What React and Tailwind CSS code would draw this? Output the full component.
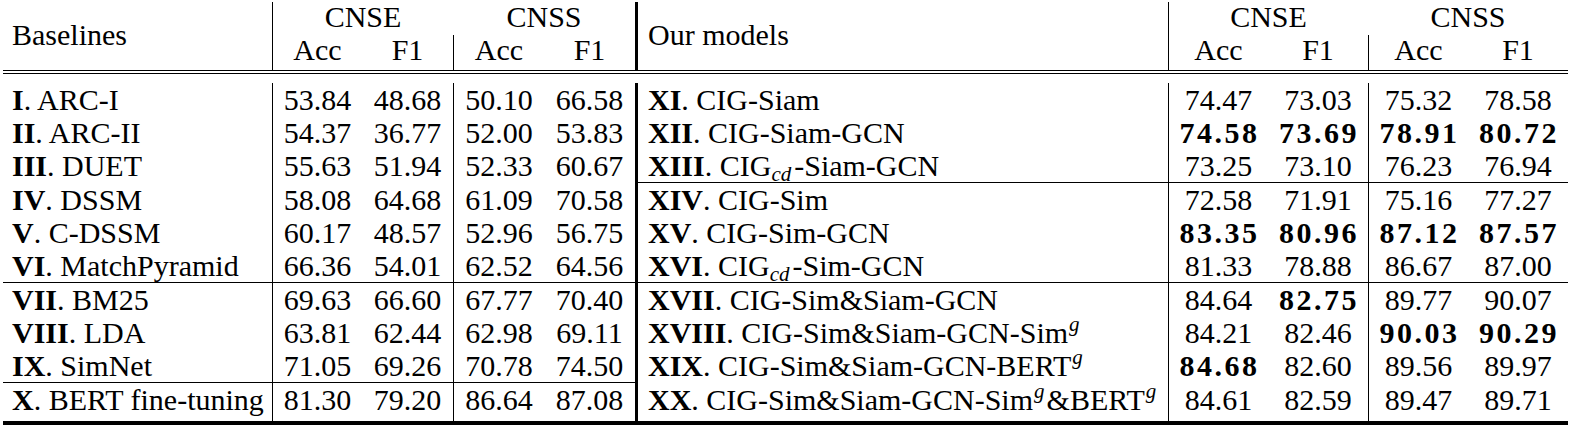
const cols = 'grid grid-cols-[269px_90px_91px_91px_91px_533px_100px_100px_100px_100px]'

const left = [
  ['I', 'ARC-I', ['53.84', '48.68', '50.10', '66.58']],
  ['II', 'ARC-II', ['54.37', '36.77', '52.00', '53.83']],
  ['III', 'DUET', ['55.63', '51.94', '52.33', '60.67']],
  ['IV', 'DSSM', ['58.08', '64.68', '61.09', '70.58']],
  ['V', 'C-DSSM', ['60.17', '48.57', '52.96', '56.75']],
  ['VI', 'MatchPyramid', ['66.36', '54.01', '62.52', '64.56']],
  ['VII', 'BM25', ['69.63', '66.60', '67.77', '70.40']],
  ['VIII', 'LDA', ['63.81', '62.44', '62.98', '69.11']],
  ['IX', 'SimNet', ['71.05', '69.26', '70.78', '74.50']],
  ['X', 'BERT fine-tuning', ['81.30', '79.20', '86.64', '87.08']],
]

const Sub = ({ children }) => (
  <sub className="text-[21px] italic leading-none bottom-[-5px] pr-[3px]">{children}</sub>
)
const Sup = ({ children }) => (
  <sup className="text-[21px] italic leading-none top-[-12px] pl-[1px] pr-[2px]">{children}</sup>
)

// numbers: [value, bold]
const right = [
  ['XI', <>CIG-Siam</>, [['74.47'], ['73.03'], ['75.32'], ['78.58']]],
  ['XII', <>CIG-Siam-GCN</>, [['74.58', 1], ['73.69', 1], ['78.91', 1], ['80.72', 1]]],
  ['XIII', <>CIG<Sub>cd</Sub>-Siam-GCN</>, [['73.25'], ['73.10'], ['76.23'], ['76.94']]],
  ['XIV', <>CIG-Sim</>, [['72.58'], ['71.91'], ['75.16'], ['77.27']]],
  ['XV', <>CIG-Sim-GCN</>, [['83.35', 1], ['80.96', 1], ['87.12', 1], ['87.57', 1]]],
  ['XVI', <>CIG<Sub>cd</Sub>-Sim-GCN</>, [['81.33'], ['78.88'], ['86.67'], ['87.00']]],
  ['XVII', <>CIG-Sim&amp;Siam-GCN</>, [['84.64'], ['82.75', 1], ['89.77'], ['90.07']]],
  ['XVIII', <>CIG-Sim&amp;Siam-GCN-Sim<Sup>g</Sup></>, [['84.21'], ['82.46'], ['90.03', 1], ['90.29', 1]]],
  ['XIX', <>CIG-Sim&amp;Siam-GCN-BERT<Sup>g</Sup></>, [['84.68', 1], ['82.60'], ['89.56'], ['89.97']]],
  ['XX', <>CIG-Sim&amp;Siam-GCN-Sim<Sup>g</Sup>&amp;BERT<Sup>g</Sup></>, [['84.61'], ['82.59'], ['89.47'], ['89.71']]],
]

function Num({ v, bold, className = '' }) {
  return (
    <div className={`text-center ${bold ? 'font-bold tracking-[2.5px] pl-[2px]' : ''} ${className}`}>{v}</div>
  )
}

function DataRow({ i }) {
  const [ln, lname, lnums] = left[i]
  const [rn, rname, rnums] = right[i]
  const lb = i === 5 || i === 8 ? 'border-b border-black' : ''
  const rb = i === 2 || i === 5 ? 'border-b border-black' : ''
  return (
    <div className={`${cols} leading-[33px]`}>
      <div className={`pl-[9px] whitespace-nowrap ${lb}`}>
        <b>{ln}</b>. {lname}
      </div>
      <Num v={lnums[0]} className={`border-l border-black ${lb}`} />
      <Num v={lnums[1]} className={lb} />
      <Num v={lnums[2]} className={`border-l border-black ${lb}`} />
      <Num v={lnums[3]} className={lb} />
      <div className={`pl-[10px] whitespace-nowrap border-l-[3px] border-black ${rb}`}>
        <b>{rn}</b>. {rname}
      </div>
      <Num v={rnums[0][0]} bold={rnums[0][1]} className={`border-l border-black ${rb}`} />
      <Num v={rnums[1][0]} bold={rnums[1][1]} className={rb} />
      <Num v={rnums[2][0]} bold={rnums[2][1]} className={`border-l border-black ${rb}`} />
      <Num v={rnums[3][0]} bold={rnums[3][1]} className={rb} />
    </div>
  )
}

export default function App() {
  return (
    <div className="w-[1572px] h-[429px] bg-white text-black font-['Liberation_Serif','Times_New_Roman',serif] text-[30px]">
      <div className="ml-[3px] w-[1565px] pt-[2px]">
        <div className={`${cols} grid-rows-[33px_35px] leading-[30px]`}>
          <div className="row-span-2 flex items-center pl-[9px] pb-[2px]">Baselines</div>
          <div className="col-span-2 border-l border-black text-center">CNSE</div>
          <div className="col-span-2 text-center">CNSS</div>
          <div className="row-span-2 flex items-center pl-[10px] pb-[2px] border-l-[3px] border-black">Our models</div>
          <div className="col-span-2 border-l border-black text-center">CNSE</div>
          <div className="col-span-2 text-center">CNSS</div>

          <div className="border-l border-black text-center">Acc</div>
          <div className="text-center">F1</div>
          <div className="border-l border-black text-center">Acc</div>
          <div className="text-center">F1</div>
          <div className="border-l border-black text-center">Acc</div>
          <div className="text-center">F1</div>
          <div className="border-l border-black text-center">Acc</div>
          <div className="text-center">F1</div>
        </div>

        <div className="h-[4px] border-y border-black" />
        <div className="h-[9px]" />

        {left.map((_, i) => (
          <DataRow key={i} i={i} />
        ))}

        <div className={`${cols} h-[5px]`}>
          <div />
          <div className="border-l border-black" />
          <div />
          <div className="border-l border-black" />
          <div />
          <div className="border-l-[3px] border-black" />
          <div className="border-l border-black" />
          <div />
          <div className="border-l border-black" />
          <div />
        </div>
        <div className="h-[4px] bg-black" />
      </div>
    </div>
  )
}
